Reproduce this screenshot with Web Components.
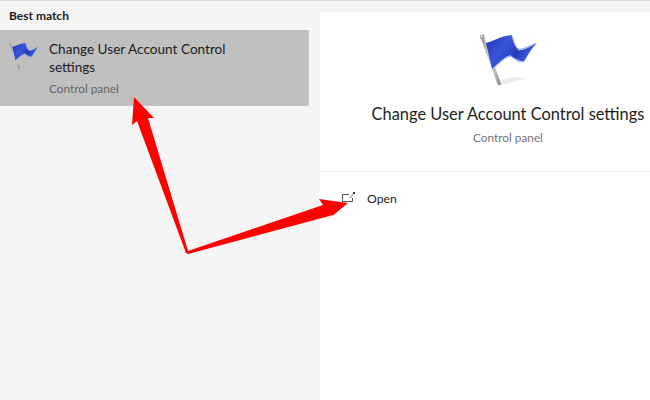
<!DOCTYPE html>
<html>
<head>
<meta charset="utf-8">
<style>
html, body { margin: 0; height: 100%; }
body { width: 650px; height: 400px; overflow: hidden; font-family: Lato, "Open Sans", sans-serif; }
</style>
</head>
<body>
<template id="flag-tpl">
<style>
:host { display: block; line-height: 0; }
svg { width: 100%; height: 100%; display: block; }
.shade { fill: var(--flag-shadow, #e6e6e6); }
</style>
<svg viewBox="60 40 175 165">
  <defs>
    <linearGradient id="cloth" x1="0" y1="0" x2="1" y2="0.5">
      <stop offset="0" stop-color="#1c36b4"/>
      <stop offset=".4" stop-color="#3a55d8"/>
      <stop offset=".7" stop-color="#1f3cbe"/>
      <stop offset="1" stop-color="#4d6be0"/>
    </linearGradient>
    <linearGradient id="pole" x1="0" y1="0" x2="1" y2="0">
      <stop offset="0" stop-color="#8a8a8a"/>
      <stop offset=".5" stop-color="#e6e6e6"/>
      <stop offset="1" stop-color="#808080"/>
    </linearGradient>
  </defs>
  <path class="shade" d="M118 198 L200 176 L160 172 L112 186Z" opacity=".75"/>
  <path d="M62 54 L72 52 L124 194 L114 198Z" fill="url(#pole)"/>
  <circle cx="67" cy="51" r="7" fill="#9a9a9a"/>
  <circle cx="65.500" cy="49" r="3" fill="#eee"/>
  <path d="M78 70 C100 64 130 46 156 46 C162 62 166 84 178 92 C196 90 214 80 232 69 C218 84 204 106 192 127 C176 132 164 116 150 110 C130 116 112 136 97 151Z" fill="url(#cloth)"/>
  <path d="M97 149 C112 134 132 114 150 108 C164 114 176 130 192 125" fill="none" stroke="#a8bbf6" stroke-width="3.500"/>
  <path d="M156 50 C160 66 166 84 178 89 C194 88 212 78 227 71" fill="none" stroke="#7e96ee" stroke-width="3"/>
</svg>
</template>

<template id="panel-tpl">
<style>
:host { display: block; position: relative; width: 650px; height: 400px; background: #f5f5f5; border-top: 1px solid #dedede; box-sizing: border-box; overflow: hidden; }
.wrap { display: flex; height: 100%; }
.left { width: 320px; flex: none; }
.right { flex: 1; padding-top: 11px; display: flex; }
.right ::slotted(*) { flex: 1; }
</style>
<div class="wrap">
  <div class="left"><slot name="left"></slot></div>
  <div class="right"><slot name="right"></slot></div>
</div>
<slot name="over"></slot>
</template>

<template id="result-tpl">
<style>
:host { display: block; padding-top: 5px; }
h2 { margin: 0 0 0 9px; font: 700 12px/20px Lato, sans-serif; color: #1b1b1b; height: 24px; }
.row { display: flex; width: 309px; height: 76px; box-sizing: border-box; background: #bfbfbf; border-bottom: 1px solid #c8c8c8; border-right: 1px solid #c8c8c8; padding: 12px 0 0 9px; }
flag-icon { width: 30px; height: 28px; flex: none; --flag-shadow: transparent; }
.txt { margin-left: 10px; width: 220px; margin-top: -2px; }
.name { font-size: 13.600px; line-height: 18px; color: #1d1d1d; }
.type { font-size: 11.800px; line-height: 16px; color: #666; margin-top: 5px; }
</style>
<h2><slot name="heading"></slot></h2>
<div class="row">
  <flag-icon></flag-icon>
  <div class="txt">
    <div class="name"><slot name="name"></slot></div>
    <div class="type"><slot name="type"></slot></div>
  </div>
</div>
</template>

<template id="detail-tpl">
<style>
:host { display: block; background: #fff; }
.head { height: 160px; box-sizing: border-box; border-bottom: 1px solid #efefef; display: flex; flex-direction: column; align-items: center; padding: 21px 0 0 46px; }
flag-icon { width: 58px; height: 55px; margin-left: 2px; }
.name { font-size: 16.400px; line-height: 24px; color: #1d1d1d; margin-top: 14px; white-space: nowrap; }
.type { font-size: 11.800px; line-height: 16px; color: #737373; margin-top: 4px; }
.actions { padding: 15px 0 0 21px; }
</style>
<div class="head">
  <flag-icon></flag-icon>
  <div class="name"><slot name="name"></slot></div>
  <div class="type"><slot name="type"></slot></div>
</div>
<div class="actions"><slot></slot></div>
</template>

<template id="action-tpl">
<style>
:host { display: flex; align-items: center; height: 22px; font-size: 12.200px; color: #1d1d1d; }
svg { width: 16px; height: 14px; flex: none; margin-right: 10px; }
</style>
<svg viewBox="0 0 16 14" fill="none">
  <path d="M8 3.500H1.500V10.500H11.500V7" stroke="#555" stroke-width="1"/>
  <path d="M9 7L12 3" stroke="#777" stroke-width="1"/>
  <rect x="12" y="1" width="2" height="2" fill="#333"/>
</svg>
<slot></slot>
</template>

<template id="arrows-tpl">
<style>
:host { position: absolute; left: 0; top: 0; width: 650px; height: 400px; pointer-events: none; }
svg { display: block; }
</style>
<svg width="650" height="400" viewBox="0 0 650 400">
  <path fill="#ff0000" d="M186 252 L137 120 L132 124 L134 96 L154 117 L148 117 L188 250 L323 204 L319 198 L348 202 L325 221 L333 214 L188 253Z"/>
</svg>
</template>

<search-panel>
  <result-list slot="left">
    <span slot="heading">Best match</span>
    <span slot="name">Change User Account Control settings</span>
    <span slot="type">Control panel</span>
  </result-list>
  <detail-pane slot="right">
    <span slot="name">Change User Account Control settings</span>
    <span slot="type">Control panel</span>
    <action-item>Open</action-item>
  </detail-pane>
  <red-arrows slot="over"></red-arrows>
</search-panel>

<script>
function register(tag, tplId) {
  customElements.define(tag, class extends HTMLElement {
    constructor() {
      super();
      this.attachShadow({ mode: "open" });
      this.shadowRoot.appendChild(document.getElementById(tplId).content.cloneNode(true));
    }
  });
}
register("flag-icon", "flag-tpl");
register("search-panel", "panel-tpl");
register("result-list", "result-tpl");
register("detail-pane", "detail-tpl");
register("action-item", "action-tpl");
register("red-arrows", "arrows-tpl");
</script>
</body>
</html>
